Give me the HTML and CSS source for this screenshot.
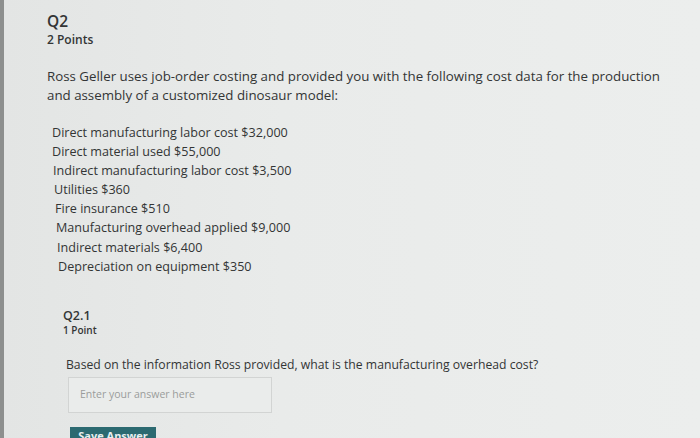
FILE: index.html
```html
<!DOCTYPE html>
<html>
<head>
<meta charset="utf-8">
<link rel="stylesheet" href="styles.css">
</head>
<body>
<div class="frame">
  <div class="question">
    <div class="qtitle">Q2</div>
    <div class="qpoints">2 Points</div>
    <p class="intro">Ross Geller uses job-order costing and provided you with the following cost data for the production and assembly of a customized dinosaur model:</p>
    <ul class="data">
      <li class="d0">Direct manufacturing labor cost $32,000</li>
      <li class="d1">Direct material used $55,000</li>
      <li class="d2">Indirect manufacturing labor cost $3,500</li>
      <li class="d3">Utilities $360</li>
      <li class="d4">Fire insurance $510</li>
      <li class="d5">Manufacturing overhead applied $9,000</li>
      <li class="d6">Indirect materials $6,400</li>
      <li class="d7">Depreciation on equipment $350</li>
    </ul>
    <div class="sub">
      <div class="stitle">Q2.1</div>
      <div class="spoints">1 Point</div>
      <p class="prompt">Based on the information Ross provided, what is the manufacturing overhead cost?</p>
      <div class="answer">Enter your answer here</div>
      <button class="save">Save Answer</button>
    </div>
  </div>
</div>
</body>
</html>
```
FILE: styles.css
```css
html, body {
  margin: 0;
  padding: 0;
  height: 100%;
  overflow: hidden;
}
body {
  background: #e8eae9;
  font-family: "Open Sans", "Noto Sans", sans-serif;
  color: #333535;
}
.frame {
  border-left: 4px solid #8d8f8e;
  height: 100%;
  background: linear-gradient(90deg, #e3e5e4 0%, #e9ebea 40%, #eceeed 100%);
}
.question {
  padding: 10px 0 0 43px;
}
.qtitle {
  font-size: 15.5px;
  line-height: 22px;
  font-weight: 600;
}
.qpoints {
  font-size: 12px;
  line-height: 16px;
  font-weight: 600;
}
.intro {
  margin: 19px 0 0 0;
  font-size: 13.3px;
  line-height: 18.5px;
  width: 640px;
}
.data {
  list-style: none;
  margin: 19px 0 0 5px;
  padding: 0;
  font-size: 12.6px;
  line-height: 19.1px;
}
.data li { white-space: nowrap; }
.d2 { padding-left: 1px; }
.d3 { padding-left: 2px; }
.d4 { padding-left: 3px; }
.d5 { padding-left: 4px; }
.d6 { padding-left: 5px; }
.d7 { padding-left: 6px; }
.sub {
  margin: 31px 0 0 16px;
}
.stitle {
  font-size: 12.5px;
  line-height: 17px;
  font-weight: 600;
}
.spoints {
  font-size: 10px;
  line-height: 13px;
  font-weight: 600;
}
.prompt {
  margin: 19px 0 0 3px;
  font-size: 12.2px;
  line-height: 18px;
}
.answer {
  margin: 3px 0 0 5px;
  width: 204px;
  height: 36px;
  padding-left: 11px;
  box-sizing: border-box;
  border: 1px solid #d2d4d3;
  background: #eaeceb;
  color: #9a9c9b;
  font-size: 10.5px;
  line-height: 32px;
}
.save {
  display: block;
  margin: 14px 0 0 7px;
  width: 86px;
  border: none;
  background: #2c6a71;
  color: #e8f0f0;
  font-family: "Open Sans", "Noto Sans", sans-serif;
  font-size: 11px;
  font-weight: 700;
  padding: 2px 0 10px 0;
  line-height: 14px;
  text-align: center;
}
```
